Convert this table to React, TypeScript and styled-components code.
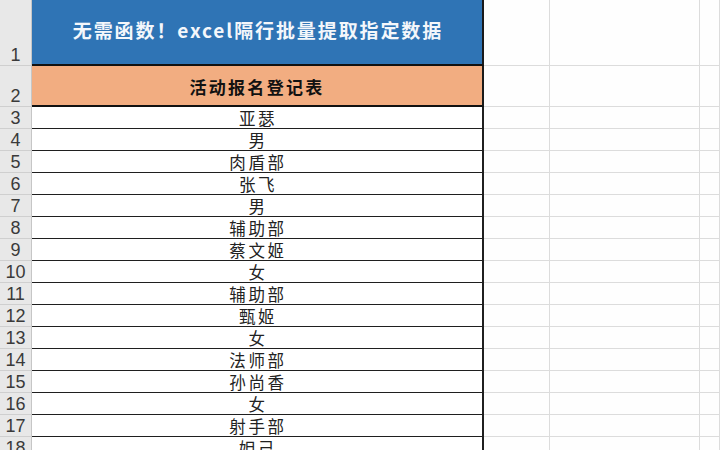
import React from "react";
import styled, { createGlobalStyle } from "styled-components";

const Global = createGlobalStyle`
  html, body { margin: 0; padding: 0; background: #ffffff; overflow: hidden; }
  * { box-sizing: border-box; }
`;

const Sheet = styled.div`
  display: grid;
  grid-template-columns: 32px 452px 66px 150px 1fr;
  grid-template-rows: 66px 41px repeat(16, 22px);
  width: 720px;
  height: 450px;
  overflow: hidden;
  font-family: "Noto Sans CJK SC", "Microsoft YaHei", sans-serif;
`;

const RowHead = styled.div<{ $bottom?: boolean }>`
  background: #e8e8e8;
  border-right: 1px solid #c6c6c6;
  border-bottom: 1px solid #cfcfcf;
  color: #3a3a3a;
  font-family: "Liberation Sans", "Noto Sans", sans-serif;
  font-size: 18px;
  display: flex;
  justify-content: center;
  align-items: ${(p) => (p.$bottom ? "flex-end" : "center")};
  padding-bottom: ${(p) => (p.$bottom ? "1px" : "0")};
  line-height: 1;
`;

const TitleCell = styled.div`
  background: #2f74b5;
  border-right: 2px solid #1a1a1a;
  border-bottom: 2px solid #111;
  color: #f4f7fb;
  font-weight: 700;
  font-size: 19px;
  letter-spacing: 1.9px;
  display: flex;
  justify-content: center;
  align-items: center;
  padding-bottom: 6px;
  padding-left: 2px;
`;

const HeaderCell = styled.div`
  background: #f2ad81;
  border-right: 2px solid #1a1a1a;
  border-bottom: 2px solid #111;
  color: #111;
  font-weight: 700;
  font-size: 17px;
  letter-spacing: 2.3px;
  display: flex;
  justify-content: center;
  align-items: center;
  padding-top: 1px;
`;

const DataCell = styled.div`
  background: #ffffff;
  border-right: 2px solid #1f1f1f;
  border-bottom: 1.5px solid #1f1f1f;
  color: #222;
  font-size: 16.5px;
  letter-spacing: 2.6px;
  line-height: 1;
  display: flex;
  justify-content: center;
  align-items: center;
  padding-top: 2px;
  padding-left: 2px;
`;

const Empty = styled.div`
  border-right: 1.5px solid #dcdcdc;
  border-bottom: 1.5px solid #dcdcdc;
  background: #fefefe;
`;

const data = [
  "亚瑟",
  "男",
  "肉盾部",
  "张飞",
  "男",
  "辅助部",
  "蔡文姬",
  "女",
  "辅助部",
  "甄姬",
  "女",
  "法师部",
  "孙尚香",
  "女",
  "射手部",
  "妲己",
];

const Blanks = () => (
  <>
    <Empty />
    <Empty />
    <Empty />
  </>
);

export default function App() {
  return (
    <>
      <Global />
      <Sheet>
        <RowHead $bottom>1</RowHead>
        <TitleCell>无需函数！excel隔行批量提取指定数据</TitleCell>
        <Blanks />
        <RowHead $bottom>2</RowHead>
        <HeaderCell>活动报名登记表</HeaderCell>
        <Blanks />
        {data.map((d, i) => (
          <React.Fragment key={i}>
            <RowHead>{i + 3}</RowHead>
            <DataCell>{d}</DataCell>
            <Blanks />
          </React.Fragment>
        ))}
      </Sheet>
    </>
  );
}
